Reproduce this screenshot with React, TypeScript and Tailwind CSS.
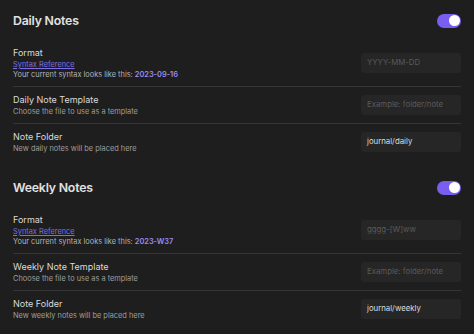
import React from "react";

function Toggle() {
  return (
    <div className="flex h-[14px] w-[24px] items-center justify-end rounded-full bg-[#7a5ef0] px-[1.5px]">
      <div className="h-[11px] w-[11px] rounded-full bg-white" />
    </div>
  );
}

function Input({ value, placeholder }: { value?: string; placeholder?: string }) {
  return (
    <div className="flex h-[20px] w-[100px] shrink-0 items-center rounded-[3px] bg-[#262626] px-[6px] text-[7.8px]">
      {value ? (
        <span className="text-[#dedede]">{value}</span>
      ) : (
        <span className="text-[#5a5a5a]">{placeholder}</span>
      )}
    </div>
  );
}

function Row({
  label,
  children,
  input,
  border = true,
}: {
  label: string;
  children: React.ReactNode;
  input: React.ReactNode;
  border?: boolean;
}) {
  return (
    <div className={"flex items-center justify-between py-[6px] " + (border ? "border-b border-[#353535]" : "")}>
      <div className="flex flex-col">
        <div className="text-[9px] leading-[14px] text-[#dadada]">{label}</div>
        {children}
      </div>
      {input}
    </div>
  );
}

function Section({
  title,
  sample,
  formatPh,
  templateLabel,
  folder,
  kind,
}: {
  title: string;
  sample: string;
  formatPh: string;
  templateLabel: string;
  folder: string;
  kind: string;
}) {
  return (
    <div className="flex flex-col">
      <div className="flex h-[15px] items-center justify-between">
        <div className="text-[12.3px] font-semibold leading-[15px] tracking-[-0.2px] text-[#e2e2e2]">{title}</div>
        <Toggle />
      </div>
      <div className="mt-[12px] flex flex-col">
        <Row label="Format" input={<Input placeholder={formatPh} />}>
          <a className="text-[7.4px] leading-[10px] text-[#7d6fe0] underline">Syntax Reference</a>
          <div className="text-[7.4px] leading-[10px] text-[#b4b4b4]">
            Your current syntax looks like this:{" "}
            <span className="font-semibold text-[#9b8cf2]">{sample}</span>
          </div>
        </Row>
        <Row label={templateLabel} input={<Input placeholder="Example: folder/note" />}>
          <div className="text-[7.4px] leading-[10px] text-[#9e9e9e]">Choose the file to use as a template</div>
        </Row>
        <Row label="Note Folder" input={<Input value={folder} />} border={false}>
          <div className="text-[7.4px] leading-[10px] text-[#9e9e9e]">New {kind} notes will be placed here</div>
        </Row>
      </div>
    </div>
  );
}

export default function App() {
  return (
    <div
      className="flex h-[334px] w-[474px] flex-col gap-[20px] overflow-hidden bg-[#1e1e1e] px-[13px] pt-[13px]"
      style={{ fontFamily: "Inter, 'Noto Sans', sans-serif" }}
    >
      <Section
        title="Daily Notes"
        sample="2023-09-16"
        formatPh="YYYY-MM-DD"
        templateLabel="Daily Note Template"
        folder="journal/daily"
        kind="daily"
      />
      <Section
        title="Weekly Notes"
        sample="2023-W37"
        formatPh="gggg-[W]ww"
        templateLabel="Weekly Note Template"
        folder="journal/weekly"
        kind="weekly"
      />
    </div>
  );
}
